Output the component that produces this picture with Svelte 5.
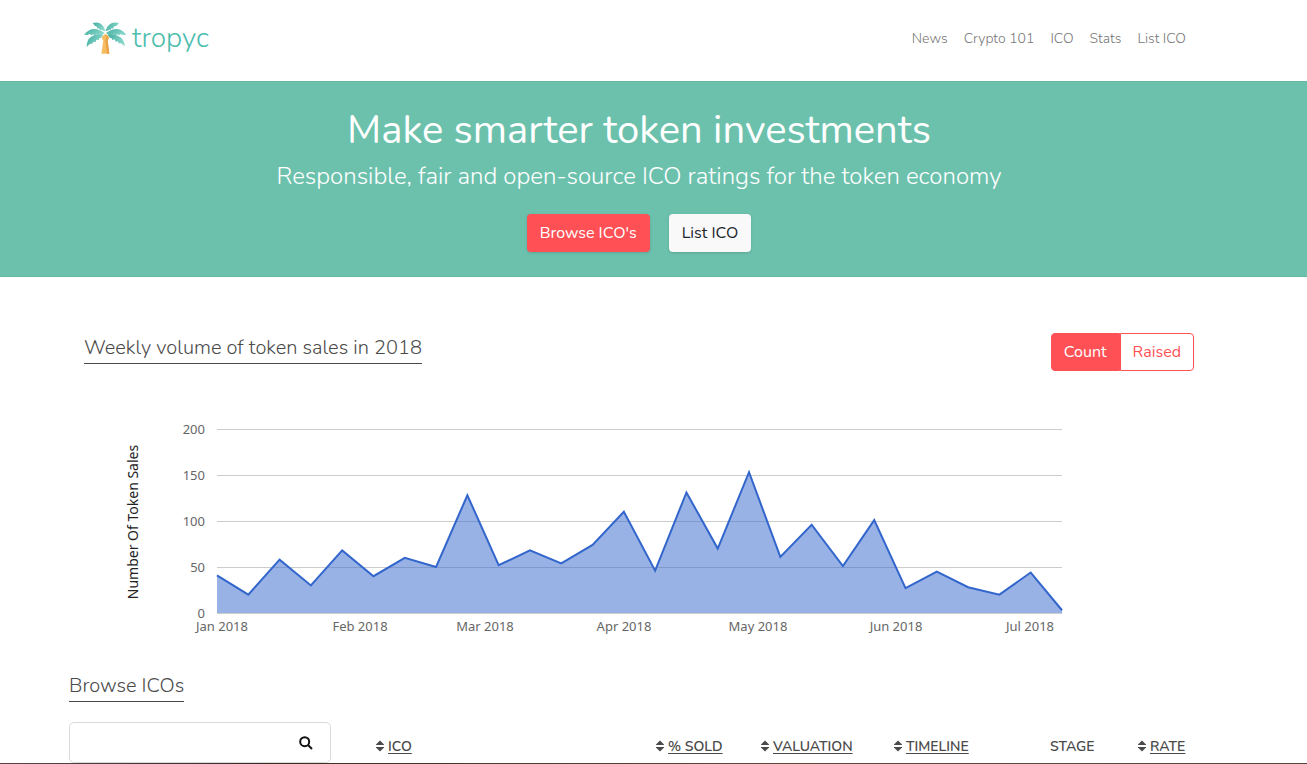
<script>
  const nav = ['News', 'Crypto 101', 'ICO', 'Stats', 'List ICO'];
  const counts = [41, 20, 58, 30, 68, 40, 60, 50, 128, 52, 68, 54, 74, 110, 46, 131, 70, 153, 61, 96, 51, 101, 27, 45, 28, 20, 44, 3];
  const months = [
    ['Jan 2018', 138], ['Feb 2018', 276], ['Mar 2018', 401], ['Apr 2018', 540],
    ['May 2018', 674], ['Jun 2018', 812], ['Jul 2018', 946]
  ];
  const ticks = [0, 50, 100, 150, 200];
  const plot = { left: 133, width: 845, base: 204, height: 184, max: 200 };
  const y = (v) => plot.base - (v / plot.max) * plot.height;
  const x = (i) => plot.left + (i * plot.width) / (counts.length - 1);
  const points = counts.map((v, i) => `${x(i)},${y(v)}`).join(' ');
  const area = `${plot.left},${plot.base} ${points} ${plot.left + plot.width},${plot.base}`;
  const columns = [
    { name: 'ICO', sort: true, cls: 'c-name' },
    { name: '% SOLD', sort: true, cls: 'c-sold' },
    { name: 'VALUATION', sort: true, cls: 'c-val' },
    { name: 'TIMELINE', sort: true, cls: 'c-time' },
    { name: 'STAGE', sort: false, cls: 'c-stage' },
    { name: 'RATE', sort: true, cls: 'c-rate' }
  ];
  let mode = $state('Count');
</script>

<header class="band">
  <div class="container bar">
    <a class="logo" href="#home">
      <svg width="42" height="32" viewBox="42 35 126 96" aria-hidden="true">
        <defs>
          <linearGradient id="leaf" x1="0" x2="1" y1="0" y2="0.4">
            <stop offset="0" stop-color="#3fae9f" />
            <stop offset="1" stop-color="#8ad6cb" />
          </linearGradient>
        </defs>
        <g fill="url(#leaf)">
          <path d="M68 38Q98 30 106 62Q99 62 94 58L91 60L87 54L83 55L79 48L75 47Z" />
          <path d="M147 38Q116 30 106 62Q113 62 118 58L121 60L125 54L129 55L133 48L139 47Z" />
          <path d="M42 73Q67 42 104 68Q96 75 88 73L86 76L80 72L76 76L70 72L65 75L59 71L53 74Z" />
          <path d="M169 73Q145 42 108 68Q116 75 123 73L126 76L131 72L136 76L142 72L147 75L152 71L158 74Z" />
          <path d="M50 110Q49 70 99 72Q96 84 88 84L86 89L79 88L77 95L70 94L67 100L60 100Z" />
          <path d="M165 108Q161 70 113 72Q117 84 125 84L127 89L134 87L137 94L143 93L147 99L153 99Z" />
        </g>
        <path fill="#f6bd62" d="M100 90A10 10 0 1 1 113 90L118 130H94Z" />
        <path fill="#e9a249" d="M105 74Q112 80 106 90L111 130H118L113 90A10 10 0 0 0 105 74Z" />
      </svg>
      <span>tropyc</span>
    </a>
    <nav>
      {#each nav as item}<a href="#{item}">{item}</a>{/each}
    </nav>
  </div>
</header>

<section class="hero band">
  <h1>Make smarter token investments</h1>
  <p>Responsible, fair and open-source ICO ratings for the token economy</p>
  <div class="actions">
    <button class="btn primary">Browse ICO's</button>
    <button class="btn light">List ICO</button>
  </div>
</section>

<main class="band">
  <section class="container volume">
    <div class="heading">
      <h2>Weekly volume of token sales in 2018</h2>
      <div class="toggle">
        {#each ['Count', 'Raised'] as m}
          <button class:on={mode === m} onclick={() => (mode = m)}>{m}</button>
        {/each}
      </div>
    </div>
    <svg class="chart" viewBox="0 0 1110 240" role="img" aria-label="Number Of Token Sales">
      {#each ticks as t}
        <line x1={plot.left} x2={plot.left + plot.width} y1={y(t) + 0.5} y2={y(t) + 0.5} stroke="#ccc" />
        <text class="tick" x="121" y={y(t) + 5} text-anchor="end">{t}</text>
      {/each}
      <polygon points={area} fill="#3366cc" fill-opacity="0.5" />
      <polyline {points} fill="none" stroke="#3366cc" stroke-width="2" />
      {#each months as [label, mx]}
        <text class="tick" x={mx} y="222" text-anchor="middle">{label}</text>
      {/each}
      <text class="axis" transform="translate(54 113) rotate(-90)" text-anchor="middle">Number Of Token Sales</text>
    </svg>
  </section>

  <section class="container browse">
    <h2>Browse ICOs</h2>
    <div class="list">
      <div class="search">
        <input type="text" aria-label="Search ICOs" />
        <button aria-label="Search">
          <svg width="14" height="14" viewBox="0 0 14 14" fill="none" stroke="#111" stroke-width="2">
            <circle cx="5.7" cy="5.7" r="4.5" /><path d="M9 9L13 13" />
          </svg>
        </button>
      </div>
      <table>
        <thead>
          <tr>
            {#each columns as c}
              <th class={c.cls}>
                {#if c.sort}
                  <svg width="8" height="12" viewBox="0 0 8 12" fill="#4a4a4a" aria-hidden="true">
                    <path d="M4 0.5L8.5 5H-0.5Z" /><path d="M4 11.5L8.5 7H-0.5Z" />
                  </svg><a href="#{c.cls}">{c.name}</a>
                {:else}{c.name}{/if}
              </th>
            {/each}
          </tr>
        </thead>
      </table>
    </div>
  </section>
</main>
<div class="edge"></div>

<style>
  :global(body) {
    background: #fff;
    color: #4a4a4a;
    font-family: Nunito, Lato, sans-serif;
    font-size: 16px;
    line-height: 24px;
  }
  h1, h2, p { margin: 0; font-weight: 400; }
  a { color: inherit; }
  button { font: inherit; cursor: pointer; }
  .band { padding-right: 29px; }
  .container { box-sizing: border-box; max-width: 1140px; margin: 0 auto; padding: 0 15px; }
  .bar { display: flex; align-items: center; justify-content: space-between; height: 81px; padding-bottom: 5px; }
  .logo { display: flex; align-items: center; gap: 6px; text-decoration: none; color: #4dbdae; font-size: 28px; font-weight: 300; }
  nav { display: flex; gap: 16px; padding: 2px 8px 0 0; font-size: 14px; font-weight: 300; color: #777; }
  nav a { text-decoration: none; }
  .hero { background: #6cc1ad; color: #fff; text-align: center; padding-top: 24px; padding-bottom: 24px; border-top: 1px solid #65b7a3; border-bottom: 1px solid #65b7a3; box-sizing: border-box; }
  .hero h1 { font-size: 40px; line-height: 48px; }
  .hero p { margin-top: 8px; font-size: 24px; line-height: 28px; font-weight: 300; }
  .actions { display: flex; justify-content: center; gap: 19px; margin-top: 24px; }
  .btn { height: 38px; padding: 0 13px; border: 0; border-radius: 4px; box-shadow: 0 1px 3px rgba(0, 0, 0, 0.15); }
  .primary { background: #ff5055; color: #fff; }
  .light { background: #f9f9f9; color: #212529; }
  .volume { padding-top: 56px; }
  .heading { display: flex; justify-content: space-between; align-items: flex-start; }
  h2 { width: fit-content; padding-top: 2px; border-bottom: 1px solid #4a4a4a; font-size: 20px; line-height: 30px; font-weight: 300; }
  .heading h2 { margin-top: -2px; }
  .toggle { display: flex; }
  .toggle button { height: 38px; padding: 0 12px; border: 1px solid #ff5055; background: #fff; color: #ff5055; }
  .toggle button:first-child { border-radius: 4px 0 0 4px; }
  .toggle button:last-child { border-radius: 0 4px 4px 0; }
  .toggle .on { background: #ff5055; color: #fff; }
  .chart { display: block; width: 100%; margin-top: 38px; }
  .tick { font-family: "Noto Sans", sans-serif; font-size: 13px; fill: #666; }
  .axis { font-family: "Noto Sans", sans-serif; font-size: 14px; fill: #222; }
  .browse { padding: 20px 0 0; }
  .list { display: flex; gap: 33px; margin-top: 20px; }
  .search { display: flex; box-sizing: border-box; width: 262px; height: 41px; border: 1px solid #d9d9d9; border-radius: 5px; }
  .search input { flex: 1; min-width: 0; border: 0; background: none; padding: 0 12px; outline: none; font: inherit; }
  .search button { display: flex; align-items: center; border: 0; background: none; padding: 0 17px; }
  table { flex: 1; table-layout: fixed; border-collapse: collapse; font-size: 14px; }
  th { padding: 8px 0 0 12px; text-align: left; font-weight: 600; white-space: nowrap; }
  th svg { margin-right: 4px; vertical-align: -1px; }
  th a { text-underline-offset: 2px; }
  .c-sold { width: 93px; }
  .c-val { width: 121px; }
  .c-time { width: 144px; }
  .c-stage { width: 76px; }
  .c-rate { width: 71px; }
  .edge { height: 1px; background: linear-gradient(90deg, #5a4446, #3a2c28 20%, #5f4a3a 60%, #54463c); }
</style>
